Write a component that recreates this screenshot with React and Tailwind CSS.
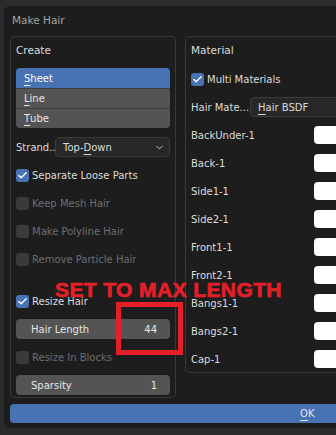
import { Check, ChevronDown } from "lucide-react";

function CheckRow({ label, checked, disabled }) {
  return (
    <div className="h-5 flex items-center gap-[3px]">
      <div
        className={
          checked
            ? "w-[13px] h-[13px] rounded-[3px] bg-[#4772b3] flex items-center justify-center"
            : "w-[13px] h-[13px] rounded-[3px] bg-[#3a3a3a]"
        }
      >
        {checked && <Check size={11} strokeWidth={3} className="text-white" />}
      </div>
      <span className={disabled ? "text-[#6e6e6e]" : "text-[#dcdcdc]"}>{label}</span>
    </div>
  );
}

function Slider({ label, value, className = "" }) {
  return (
    <div className={"h-5 rounded-[4px] bg-[#545454] flex items-center justify-between pl-[15px] pr-[13px] text-[#e6e6e6] " + className}>
      <span>{label}</span>
      <span>{value}</span>
    </div>
  );
}

function ListItem({ first, rest, selected }) {
  return (
    <div
      className={
        selected
          ? "h-5 flex items-center pl-2 bg-[#4772b3] text-white"
          : "h-5 flex items-center pl-2 bg-[#545454] text-[#e6e6e6] border-t border-[#3d3d3d]"
      }
    >
      <span className="underline underline-offset-[3px] decoration-[1px]">{first}</span>
      <span>{rest}</span>
    </div>
  );
}

const materials = ["BackUnder-1", "Back-1", "Side1-1", "Side2-1", "Front1-1", "Front2-1", "Bangs1-1", "Bangs2-1", "Cap-1"];

export default function App() {
  return (
    <div className="relative w-[336px] h-[435px] overflow-hidden bg-[#2b2b2b] font-['DejaVu_Sans',sans-serif] text-[10px]">
      <div className="absolute left-[4px] top-[6px] w-[400px] h-[422px] rounded-tl-[6px] rounded-bl-[6px] bg-[#1d1d1d]">
        <div className="h-[30px] pl-2 flex items-center text-[#a3a3a3] text-[10.5px]">Make Hair</div>

        <div className="flex gap-[9px] pl-[6px]">
          {/* left panel */}
          <div className="w-[166px] h-[362px] rounded-[5px] border border-[#3a3a3a] px-[5px] pt-[4px] flex flex-col">
            <div className="h-5 flex items-center text-[#dcdcdc] text-[10.5px]">Create</div>
            <div className="mt-[7px] rounded-[4px] overflow-hidden">
              <ListItem first="S" rest="heet" selected />
              <ListItem first="L" rest="ine" />
              <ListItem first="T" rest="ube" />
            </div>
            <div className="mt-[9px] h-5 flex items-center text-[#dcdcdc]">
              <span className="w-[39px] shrink-0">Strand...</span>
              <div className="flex-1 h-5 rounded-[4px] bg-[#282828] border border-[#3a3a3a] flex items-center justify-between pl-[7px] pr-[4px]">
                <span>
                  Top-<span className="underline underline-offset-[3px]">D</span>own
                </span>
                <ChevronDown size={11} className="text-[#cfcfcf]" />
              </div>
            </div>
            <div className="mt-2 flex flex-col gap-2">
              <CheckRow label="Separate Loose Parts" checked />
              <CheckRow label="Keep Mesh Hair" disabled />
              <CheckRow label="Make Polyline Hair" disabled />
              <CheckRow label="Remove Particle Hair" disabled />
            </div>
            <div className="mt-[22px] flex flex-col gap-2">
              <CheckRow label="Resize Hair" checked />
              <Slider label="Hair Length" value="44" />
              <CheckRow label="Resize In Blocks" disabled />
              <Slider label="Sparsity" value="1" />
            </div>
          </div>

          {/* right panel */}
          <div className="w-[200px] h-[337px] rounded-[5px] border border-[#3a3a3a] pl-[5px] pt-[4px] flex flex-col gap-2 text-[#dcdcdc]">
            <div className="h-5 flex items-center text-[10.5px]">Material</div>
            <CheckRow label="Multi Materials" checked />
            <div className="h-5 flex items-center">
              <span className="w-[59px] shrink-0">Hair Mate...</span>
              <div className="flex-1 h-5 rounded-l-[4px] bg-[#282828] border border-[#3a3a3a] flex items-center pl-[7px]">
                <span>
                  <span className="underline underline-offset-[3px]">H</span>air BSDF
                </span>
              </div>
            </div>
            {materials.map((m) => (
              <div key={m} className="h-5 flex items-center">
                <span className="w-[123px] shrink-0">{m}</span>
                <div className="w-[40px] h-[18px] rounded-l-[4px] bg-white" />
              </div>
            ))}
          </div>
        </div>

        <div className="mt-[6px] ml-[6px] h-[19px] rounded-l-[4px] bg-[#4772b3] flex items-center pl-[290px] text-[#e8e8e8]">
          <span className="underline underline-offset-[3px] decoration-[1px]">O</span>
          <span>K</span>
        </div>
      </div>

      {/* annotation */}
      <div className="absolute left-[55px] top-[279px] font-['Liberation_Sans',sans-serif] font-bold text-[21px] leading-[22px] tracking-[0.4px] text-[#e51f27] [-webkit-text-stroke:0.7px_#e51f27] whitespace-nowrap">
        SET TO MAX LENGTH
      </div>
      <div className="absolute left-[116px] top-[302px] w-[67px] h-[53px] border-[5px] border-[#e51f27]" />
    </div>
  );
}
